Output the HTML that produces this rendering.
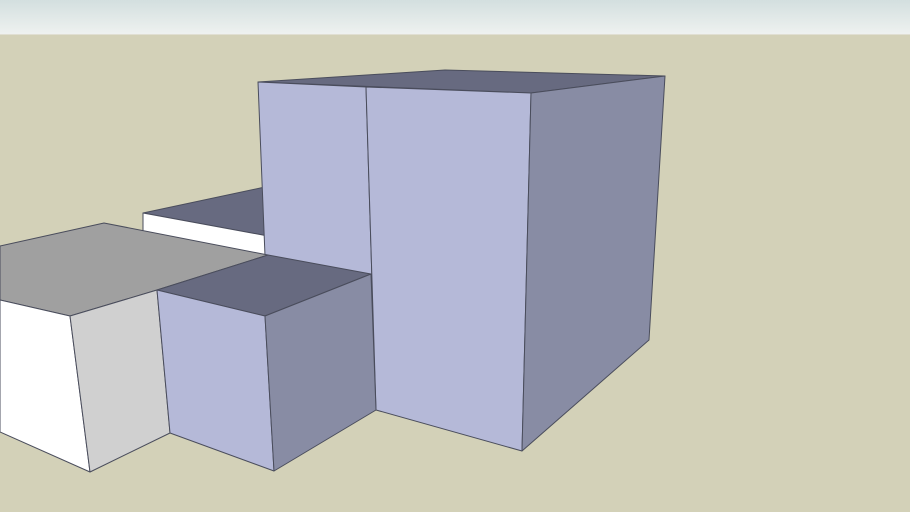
<!DOCTYPE html>
<html><head><style>html,body{margin:0;padding:0;width:910px;height:512px;overflow:hidden}</style></head>
<body>
<svg width="910" height="512" viewBox="0 0 910 512" xmlns="http://www.w3.org/2000/svg">
<defs><linearGradient id="sky" x1="0" y1="0" x2="0" y2="1"><stop offset="0" stop-color="#d3dfdf"/><stop offset="1" stop-color="#eff2f0"/></linearGradient></defs>
<rect width="910" height="35" fill="url(#sky)"/>
<rect y="34" width="910" height="1" fill="#e0dfd2"/>
<rect y="35" width="910" height="477" fill="#d3d1b8"/>
<g stroke="#4a4d5c" stroke-width="1" stroke-linejoin="round">
<!-- back box -->
<polygon points="143,213 265,187 268,236" fill="#676a80"/>
<polygon points="143,213 268,236 268,262 143,240" fill="#ffffff"/>
<!-- big box -->
<polygon points="258,82 445,70 665,76 531,93" fill="#676a80"/>
<polygon points="258,82 366,87 376,410 270,380" fill="#b5b9d8"/>
<polygon points="366,87 531,93 522,451 376,410" fill="#b5b9d8"/>
<polygon points="531,93 665,76 649,340 522,451" fill="#888ca4"/>
<!-- gray box -->
<polygon points="0,246 104,223 268,255 157,290 70,316 0,300" fill="#a0a0a0"/>
<polygon points="0,300 70,316 90,472 0,432" fill="#ffffff"/>
<polygon points="70,316 157,290 170,433 90,472" fill="#d0d0d0"/>
<!-- small blue box -->
<polygon points="157,290 268,255 371,274 265,316" fill="#676a80"/>
<polygon points="157,290 265,316 274,471 170,433" fill="#b5b9d8"/>
<polygon points="265,316 371,274 376,410 274,471" fill="#888ca4"/>
</g>
</svg>
</body></html>
